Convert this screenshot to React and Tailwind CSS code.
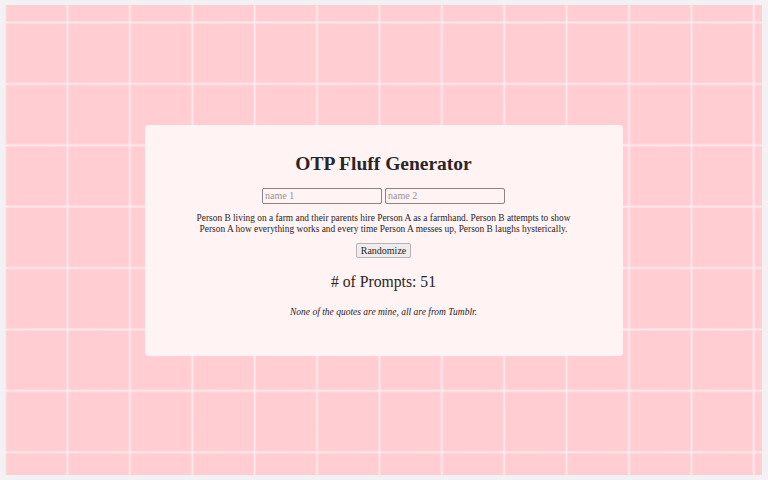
export default function App() {
  return (
    <div className="h-[480px] w-[768px] bg-[#f3f1f3] p-[5px] pr-[6px] font-['Liberation_Serif',serif] text-[#2b2626]">
      {/* pink plaid backdrop */}
      <div className="flex h-full w-full items-center justify-center bg-[#ffcdd2] bg-[linear-gradient(to_right,rgba(255,232,236,0.5)_0_1px,rgba(255,240,243,0.8)_1px_2px,rgba(255,232,236,0.5)_2px_3px,transparent_3px),linear-gradient(to_bottom,rgba(255,232,236,0.5)_0_1px,rgba(255,240,243,0.8)_1px_2px,rgba(255,232,236,0.5)_2px_3px,transparent_3px)] bg-[size:62.4px_61.4px] bg-[position:61px_16px]">
        <div className="flex h-[231px] w-[478px] flex-col items-center rounded-[4px] bg-[#fff3f4] pt-[27px]">
          <h1 className="text-[19.5px] font-bold leading-[24px]">OTP Fluff Generator</h1>

          <div className="mt-[12px] flex gap-[3px]">
            <input
              placeholder="name 1"
              className="h-[16px] w-[120px] rounded-[2px] border border-[#8a8486] bg-transparent px-[2px] text-[10px] placeholder:text-[#9a9496]"
            />
            <input
              placeholder="name 2"
              className="h-[16px] w-[120px] rounded-[2px] border border-[#8a8486] bg-transparent px-[2px] text-[10px] placeholder:text-[#9a9496]"
            />
          </div>

          <p className="mt-[9px] w-[390px] text-center text-[9.4px] leading-[11px]">
            Person B living on a farm and their parents hire Person A as a farmhand. Person B attempts to show Person A how
            everything works and every time Person A messes up, Person B laughs hysterically.
          </p>

          <button className="mt-[8px] h-[15px] rounded-[2px] border border-[#b8b2b4] bg-[#efeced] px-[4px] text-[10px] leading-[13px]">
            Randomize
          </button>

          <p className="mt-[14px] text-[15.7px] leading-[20px]">
            # of Prompts: <span>51</span>
          </p>

          <p className="mt-[13px] text-[9.5px] italic">None of the quotes are mine, all are from Tumblr.</p>
        </div>
      </div>
    </div>
  );
}
